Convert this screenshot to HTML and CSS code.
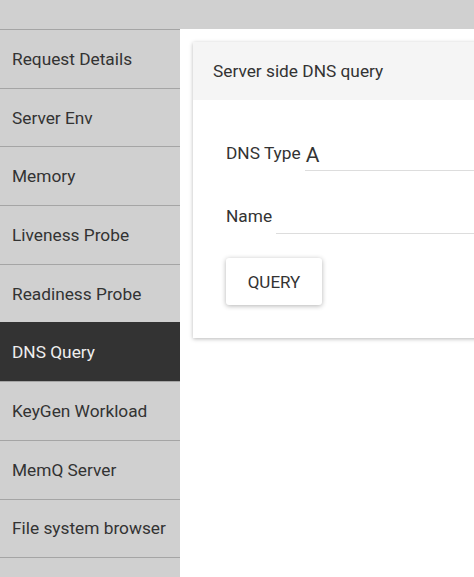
FILE: index.html
```html
<html><head><meta charset="UTF-8"><meta name="viewport" content="width=device-width, initial-scale=1.0"><title>DNS Query</title>
<link rel="stylesheet" href="styles.css">
</head>
<body>
<div class="topbar"></div>
<div class="layout">
    <nav class="sidebar">
        <a class="nav-item">Request Details</a>
        <a class="nav-item">Server Env</a>
        <a class="nav-item">Memory</a>
        <a class="nav-item">Liveness Probe</a>
        <a class="nav-item">Readiness Probe</a>
        <a class="nav-item active">DNS Query</a>
        <a class="nav-item">KeyGen Workload</a>
        <a class="nav-item">MemQ Server</a>
        <a class="nav-item">File system browser</a>
        <a class="nav-item"></a>
    </nav>
    <main class="main">
        <div class="card">
            <div class="card-header">Server side DNS query</div>
            <div class="card-body">
                <div class="field-row">
                    <label>DNS Type</label>
                    <div class="field select">A</div>
                </div>
                <div class="field-row">
                    <label>Name</label>
                    <div class="field"></div>
                </div>
                <button class="btn">QUERY</button>
            </div>
        </div>
    </main>
</div>
</body></html>
```

FILE: styles.css
```css
body {
    margin: 0;
    font-family: 'Roboto', sans-serif;
    color: #333;
    background-color: #fff;
    overflow: hidden;
    height: 577px;
}

.topbar {
    height: 29px;
    background-color: #d0d0d0;
}

.layout {
    display: flex;
    height: 548px;
    overflow: hidden;
}

.sidebar {
    width: 180px;
    flex-shrink: 0;
    background-color: #d0d0d0;
    display: flex;
    flex-direction: column;
}

.nav-item {
    display: flex;
    align-items: center;
    height: 57.7px;
    flex-shrink: 0;
    padding-left: 12px;
    border-top: 1px solid #a5a5a5;
    font-size: 17.3px;
    color: #333;
}

.nav-item.active {
    background-color: #333;
    color: #eee;
    border-top-color: #333;
}

.main {
    flex: 1;
    padding: 13px 0 0 13px;
    min-width: 0;
}

.card {
    width: 340px;
    background-color: #fff;
    box-shadow: 0 1px 4px rgba(0, 0, 0, 0.28);
}

.card-header {
    height: 58px;
    display: flex;
    align-items: center;
    padding-left: 20px;
    background-color: #f5f5f5;
    font-size: 17.3px;
}

.card-body {
    padding: 35px 0 33px 33px;
}

.field-row {
    display: flex;
    align-items: flex-end;
    height: 36px;
    margin-bottom: 27px;
}

.field-row label {
    font-size: 17.3px;
    padding-bottom: 8px;
    margin-right: 4px;
}

.field {
    flex: 1;
    height: 30px;
    border-bottom: 1px solid #ddd;
}

.select {
    font-size: 21px;
    line-height: 30px;
    padding-left: 1px;
}

.btn {
    margin-top: -3px;
    width: 96px;
    height: 47px;
    border: none;
    border-radius: 3px;
    background-color: #fff;
    color: #333;
    font-family: 'Roboto', sans-serif;
    font-size: 17px;
    box-shadow: 0 1px 5px rgba(0, 0, 0, 0.3);
    cursor: pointer;
}
```
